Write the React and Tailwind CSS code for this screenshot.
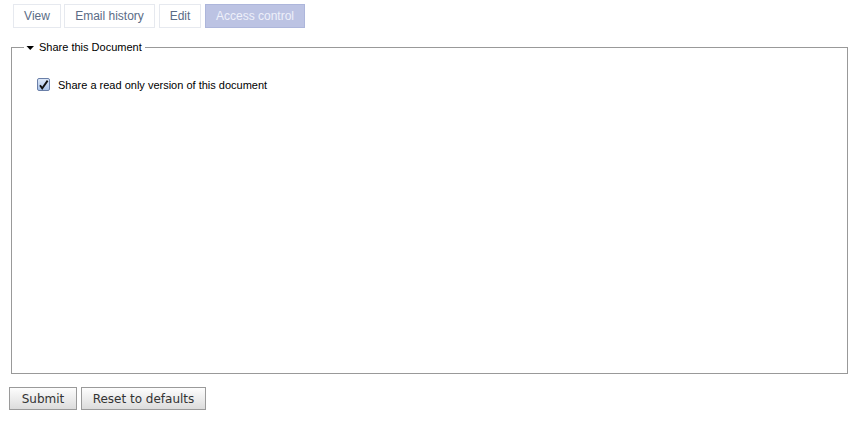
export default function App() {
  const tab = "h-[24px] flex items-center justify-center border border-[#e6e9ef] text-[12px] text-[#5b6c86]";
  return (
    <div className="w-[854px] h-[436px] bg-white" style={{ fontFamily: '"Liberation Sans", Arial, sans-serif' }}>
      <div className="flex pl-[13px] pt-[4px]">
        <div className={tab + " w-[48px]"}>View</div>
        <div className={tab + " w-[91px] ml-[3px]"}>Email history</div>
        <div className={tab + " w-[42px] ml-[4px]"}>Edit</div>
        <div className="h-[24px] w-[100px] ml-[4px] flex items-center justify-center border border-[#adb6db] bg-[#bcc3e3] text-[12px] text-[#eef0fa]">Access control</div>
      </div>
      <fieldset className="ml-[11px] w-[837px] h-[335px] mt-[11px] border border-[#999] px-[25px] pt-0">
        <legend className="flex items-center text-[11px] text-black pl-[2px] pr-[3px] ml-[-13px]">
          <svg width="9" height="6" viewBox="0 0 9 6" className="mr-[4px] mt-[1px]"><path d="M0.5 1 L8 1 L4.25 5 Z" fill="#000" /></svg>
          <span>Share this Document</span>
        </legend>
        <label className="flex items-center mt-[21px] text-[11px] text-black">
          <span className="w-[13px] h-[13px] mr-[8px] border border-[#6a7fa8] rounded-[2px] bg-gradient-to-b from-[#dde8f8] to-[#aac4ea] flex items-center justify-center">
            <svg width="12" height="12" viewBox="0 0 12 12"><path d="M2.2 6.2 L4.6 9.6 L10.5 1.2" stroke="#111" strokeWidth="2" fill="none" /></svg>
          </span>
          Share a read only version of this document
        </label>
      </fieldset>
      <div className="flex gap-[4px] pl-[9px] mt-[13px]" style={{ fontFamily: '"DejaVu Sans", Verdana, sans-serif' }}>
        <button className="h-[23px] w-[68px] border border-[#9a9a9a] bg-gradient-to-b from-[#fdfdfd] to-[#dcdcdc] text-[12px] text-[#333]">Submit</button>
        <button className="h-[23px] w-[125px] border border-[#9a9a9a] bg-gradient-to-b from-[#fdfdfd] to-[#dcdcdc] text-[12px] text-[#333]">Reset to defaults</button>
      </div>
    </div>
  );
}
